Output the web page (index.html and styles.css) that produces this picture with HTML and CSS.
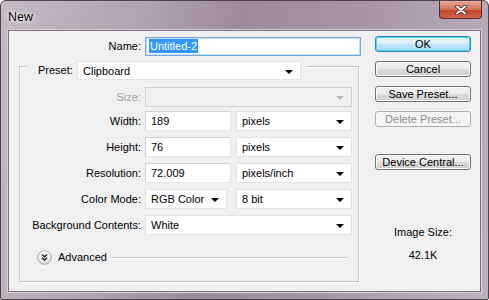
FILE: index.html
```
<!DOCTYPE html>
<html>
<head>
    <title>New</title>
    <link rel="stylesheet" href="styles.css">
</head>
<body>
    <div class="window">
        <div class="titlebar">
            <span class="title">New</span>
            <div class="close">
                <svg width="14" height="10" viewBox="0 0 14 10"><path d="M3 1.5 L11 8.5 M11 1.5 L3 8.5" stroke="#3a1a14" stroke-width="3.4" stroke-linecap="round"/><path d="M3 1.5 L11 8.5 M11 1.5 L3 8.5" stroke="#fff" stroke-width="2" stroke-linecap="round"/></svg>
            </div>
        </div>

        <div class="client">
            <div class="form">
                <div class="row name-row">
                    <label class="lbl">Name:</label>
                    <div class="field text focus name-field"><span class="selected">Untitled-2</span></div>
                </div>

                <div class="group">
                    <div class="preset-row">
                        <label class="preset-lbl">Preset:</label>
                        <div class="field select preset-select">Clipboard<span class="arrow"></span></div>
                    </div>

                    <div class="row size-row">
                        <label class="lbl disabled">Size:</label>
                        <div class="field select off full"><span class="arrow"></span></div>
                    </div>
                    <div class="row">
                        <label class="lbl">Width:</label>
                        <div class="field text num">189</div>
                        <div class="field select unit">pixels<span class="arrow"></span></div>
                    </div>
                    <div class="row">
                        <label class="lbl">Height:</label>
                        <div class="field text num">76</div>
                        <div class="field select unit">pixels<span class="arrow"></span></div>
                    </div>
                    <div class="row">
                        <label class="lbl">Resolution:</label>
                        <div class="field text num">72.009</div>
                        <div class="field select unit">pixels/inch<span class="arrow"></span></div>
                    </div>
                    <div class="row">
                        <label class="lbl">Color Mode:</label>
                        <div class="field select mode">RGB Color<span class="arrow"></span></div>
                        <div class="field select unit">8 bit<span class="arrow"></span></div>
                    </div>
                    <div class="row">
                        <label class="lbl">Background Contents:</label>
                        <div class="field select full">White<span class="arrow"></span></div>
                    </div>

                    <div class="advanced">
                        <span class="adv-icon">
                            <svg width="15" height="15" viewBox="0 0 15 15">
                                <defs>
                                    <linearGradient id="g" x1="0" y1="0" x2="0" y2="1">
                                        <stop offset="0" stop-color="#ffffff"/>
                                        <stop offset="1" stop-color="#dcdcdc"/>
                                    </linearGradient>
                                </defs>
                                <circle cx="7.5" cy="7.5" r="6.8" fill="url(#g)" stroke="#a9a9a9"/>
                                <path d="M5 4.5 L7.5 6.8 L10 4.5 M5 7.8 L7.5 10.1 L10 7.8" fill="none" stroke="#222" stroke-width="1.4"/>
                            </svg>
                        </span>
                        <span class="adv-text">Advanced</span>
                        <span class="adv-line"></span>
                    </div>
                </div>
            </div>

            <div class="side">
                <button class="btn default">OK</button>
                <button class="btn">Cancel</button>
                <button class="btn">Save Preset...</button>
                <button class="btn" disabled>Delete Preset...</button>
                <button class="btn central">Device Central...</button>
                <div class="size-info">
                    <div>Image Size:</div>
                    <div class="size-value">42.1K</div>
                </div>
            </div>
        </div>
    </div>
</body>
</html>
```

FILE: styles.css
```
body {
    margin: 0;
    font-family: "Liberation Sans", Arial, sans-serif;
    font-size: 11px;
    color: #000;
    background: #fff;
}

.window {
    width: 489px;
    height: 300px;
    box-sizing: border-box;
    border: 1px solid #4e434e;
    border-radius: 6px 6px 2px 2px;
    background: linear-gradient(100deg, #c4b9c4 0%, #b2a4b2 25%, #9c8b9c 45%, #a493a4 65%, #beb2be 100%);
    padding: 0 7px 7px 7px;
    display: flex;
    flex-direction: column;
}

.titlebar {
    height: 29px;
    display: flex;
    align-items: flex-start;
    justify-content: space-between;
}

.title {
    font-family: "Open Sans", "Liberation Sans", sans-serif;
    font-size: 12px;
    margin-top: 7px;
    text-shadow: 0 0 6px #fff, 0 0 4px #fff;
}

.close {
    width: 41px;
    height: 17px;
    margin-right: -1px;
    border: 1px solid #5a2a24;
    border-top: none;
    border-radius: 0 0 4px 4px;
    background: linear-gradient(#e6a896, #d2715c 50%, #c0422c 51%, #d2644a);
    display: flex;
    align-items: center;
    justify-content: center;
}

.client {
    flex: 1;
    background: #f0f0f0;
    border: 1px solid #7e707e;
    box-shadow: 0 0 0 1px #d9d0d9;
    display: flex;
    padding-top: 5px;
}

.form {
    width: 352px;
}

.row {
    display: flex;
    align-items: center;
    height: 20px;
}

.lbl {
    width: 125px;
    padding-right: 4px;
    text-align: right;
    box-sizing: border-box;
    flex: none;
}

.name-row .lbl {
    width: 136px;
}

.disabled {
    color: #a0a0a0;
}

.field {
    box-sizing: border-box;
    height: 20px;
    background: #fff;
    border: 1px solid #dadada;
    padding: 0 5px;
    line-height: 18px;
    position: relative;
    flex: none;
    white-space: nowrap;
}

.text {
    border-color: #d2d2d2 #e6e6e6 #e6e6e6 #d2d2d2;
}

.focus {
    border-color: #6fa8dc;
    box-shadow: inset 0 0 0 1px #c7e0f6;
}

.name-field {
    width: 216px;
    height: 19px;
    line-height: 17px;
    padding-left: 3px;
}

.selected {
    background: #3399ff;
    color: #fff;
    padding: 1px 1px;
}

.select {
    border-color: #e3e3e3;
}

.arrow {
    position: absolute;
    right: 7px;
    top: 8px;
    border-left: 4px solid transparent;
    border-right: 4px solid transparent;
    border-top: 4px solid #000;
}

.off {
    background: #f0f0f0;
    border-color: #d4d4d4;
}

.off .arrow {
    border-top-color: #b8b8b8;
}

.full {
    width: 207px;
}

.num {
    width: 86px;
    margin-right: 5px;
}

.unit {
    width: 116px;
}

.mode {
    width: 82px;
    margin-right: 9px;
}

.group {
    margin: 10px 0 0 10px;
    width: 340px;
    height: 216px;
    box-sizing: border-box;
    border: 1px solid #c6c6c6;
    box-shadow: inset 1px 1px 0 #fff, 1px 1px 0 #fff;
}

.preset-row {
    display: flex;
    align-items: center;
    margin: -7px 0 0 7px;
    width: 279px;
    height: 20px;
    padding-left: 11px;
    box-sizing: border-box;
    background: #f0f0f0;
}

.preset-lbl {
    width: 39px;
}

.preset-select {
    width: 224px;
    height: 19px;
}

.size-row {
    margin-top: 7px;
    margin-bottom: -2px;
}

.group .row + .row {
    margin-top: 6px;
}

.advanced {
    display: flex;
    align-items: center;
    margin: 14px 0 0 17px;
    height: 16px;
}

.adv-icon {
    display: flex;
    margin-right: 6px;
}

.adv-line {
    margin-left: 5px;
    width: 235px;
    height: 1px;
    background: #c9c9c9;
    box-shadow: 0 1px 0 #fff;
}

.side {
    margin-left: 14px;
    width: 96px;
    display: flex;
    flex-direction: column;
}

.btn {
    font-family: "Liberation Sans", Arial, sans-serif;
    font-size: 11px;
    height: 16px;
    margin-bottom: 9px;
    padding: 0;
    border: 1px solid #707070;
    border-radius: 3px;
    background: linear-gradient(#f2f2f2, #ebebeb 50%, #dddddd 51%, #cfcfcf);
    box-shadow: inset 0 0 0 1px #fcfcfc;
    color: #000;
    line-height: 14px;
}

.default {
    border-color: #3c7fb1;
    background: linear-gradient(#eaf6fd, #d9f0fc 50%, #bee6fd 51%, #a7d9f5);
    box-shadow: inset 0 0 0 1px #48d6fb;
}

.btn:disabled {
    color: #8d8d8d;
    border-color: #adb2b5;
    background: #f4f4f4;
    box-shadow: none;
}

.central {
    margin-top: 18px;
}

.size-info {
    margin-top: 46px;
    text-align: center;
    line-height: 14px;
}

.size-value {
    margin-top: 9px;
}
```
